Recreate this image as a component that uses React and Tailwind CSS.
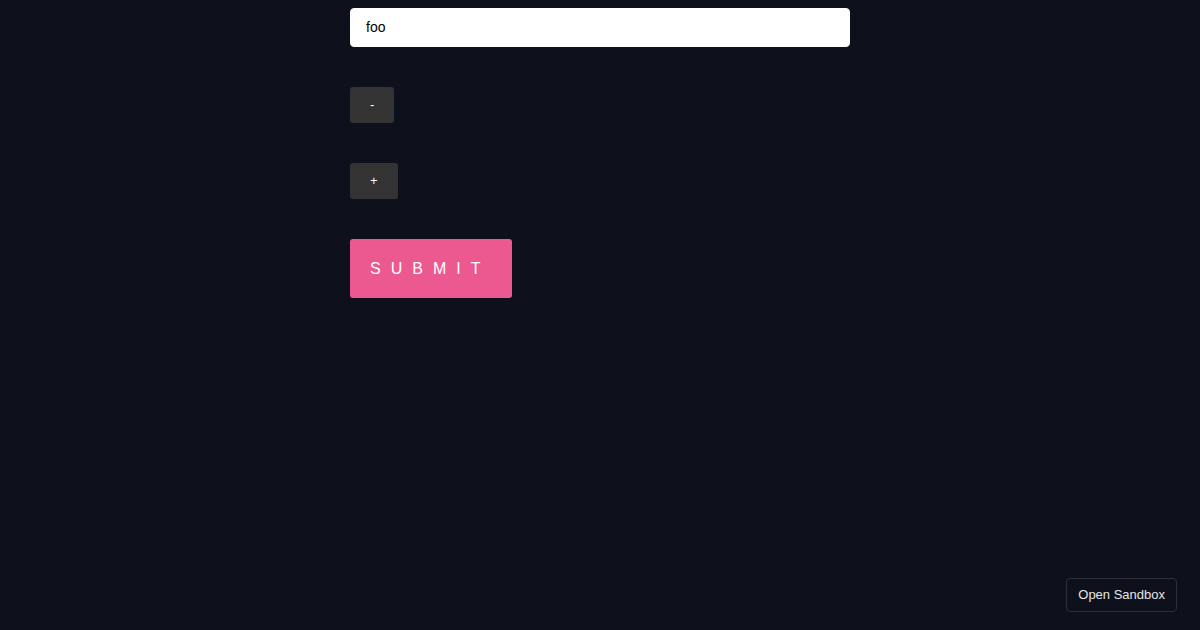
import { useState } from 'react';

export default function App() {
  const [value, setValue] = useState('foo');

  return (
    <div className="relative min-h-screen bg-[#0e101c] font-['Liberation_Sans',Arial,sans-serif]">
      <form
        className="mx-auto w-[500px] pt-2"
        onSubmit={(e) => e.preventDefault()}
      >
        <input
          className="block w-full rounded border border-white bg-white px-[15px] py-[10px] text-[14px] leading-[17px] text-black outline-none"
          value={value}
          onChange={(e) => setValue(e.target.value)}
        />
        <div className="mt-10">
          <button type="button" className="rounded-[3px] bg-[#333333] px-5 py-[10px] text-[13px] leading-[16px] text-white">
            -
          </button>
        </div>
        <div className="mt-10">
          <button type="button" className="rounded-[3px] bg-[#333333] px-5 py-[10px] text-[13px] leading-[16px] text-white">
            +
          </button>
        </div>
        <div className="mt-10">
          <button
            type="submit"
            className="rounded-[3px] bg-[#ec5990] py-5 pl-5 pr-[22px] text-[16px] font-thin uppercase leading-[19px] tracking-[10px] text-white"
          >
            Submit
          </button>
        </div>
      </form>

      <button className="absolute bottom-[18px] right-[23px] rounded border border-[#2e313b] bg-[#0e101c] px-[11px] py-2 text-[13px] leading-4 text-[#e6e6e6]">
        Open Sandbox
      </button>
    </div>
  );
}
